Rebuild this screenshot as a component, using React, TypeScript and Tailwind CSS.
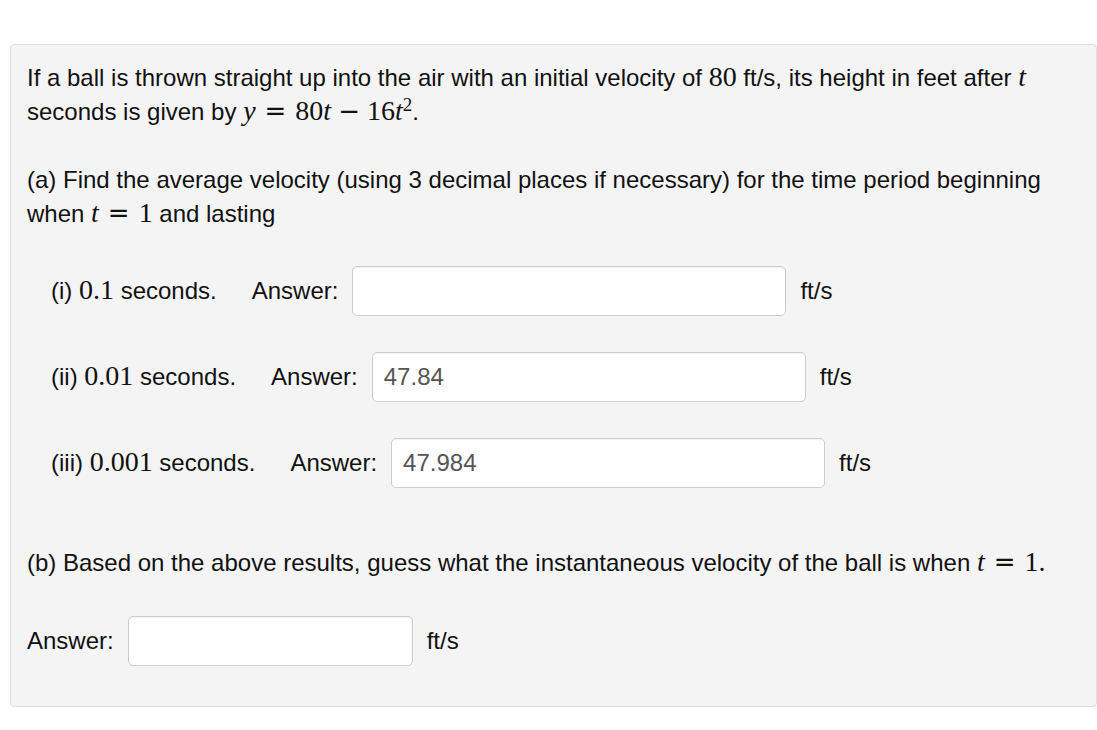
import React from "react";

const sans = { fontFamily: '"Liberation Sans", Arial, Helvetica, sans-serif' };

function M({ children }: { children: React.ReactNode }) {
  return (
    <span className="text-[28px] leading-none [font-family:'Liberation_Serif','Times_New_Roman',serif]">
      {children}
    </span>
  );
}

function V({ children }: { children: React.ReactNode }) {
  return <span className="italic">{children}</span>;
}

// relation / binary operator with KaTeX-like spacing
function Op({ children, rel }: { children: React.ReactNode; rel?: boolean }) {
  return (
    <span
      className={`text-[26px] [font-family:'DejaVu_Sans',sans-serif] ${rel ? "mx-[9px]" : "mx-[7px]"}`}
    >
      {children}
    </span>
  );
}

function AnswerRow({
  label,
  value,
  width,
  indent,
}: {
  label: React.ReactNode;
  value?: string;
  width: string;
  indent?: boolean;
}) {
  return (
    <div className={`flex items-center h-[50px] ${indent ? "ml-[24px]" : ""}`}>
      {label && <span className="mr-[35px] whitespace-nowrap">{label}</span>}
      <span className="mr-[14px]">Answer:</span>
      <input
        readOnly
        defaultValue={value}
        className={`${width} h-[50px] rounded-[5px] border border-[#cccccc] bg-white px-[11px] text-[24px] text-[#555555] outline-none shadow-[inset_0_1px_1px_rgba(0,0,0,0.05)]`}
        style={sans}
      />
      <span className="ml-[14px]">ft/s</span>
    </div>
  );
}

export default function App() {
  return (
    <div className="min-h-screen bg-white pt-[44px] pl-[10px] overflow-hidden" style={sans}>
      <div className="w-[1087px] rounded-[4px] border border-[#dedede] bg-[#f4f4f4] px-4 pt-4 pb-[40px] text-[24px] leading-[34px] text-[#111111]">
        <p>
          If a ball is thrown straight up into the air with an initial velocity of <M>80</M> ft/s, its height in feet after{" "}
          <M><V>t</V></M> seconds is given by{" "}
          <M>
            <V>y</V>
            <Op rel>=</Op>80<V>t</V>
            <Op>−</Op>16<V>t</V>
            <sup className="text-[19px] leading-none">2</sup>
          </M>
          .
        </p>

        <p className="mt-[34px]">
          (a) Find the average velocity (using 3 decimal places if necessary) for the time period beginning when{" "}
          <M>
            <V>t</V>
            <Op rel>=</Op>1
          </M>{" "}
          and lasting
        </p>

        <div className="mt-[35px] flex flex-col gap-[36px]">
          <AnswerRow
            indent
            label={
              <>
                (i) <M>0.1</M> seconds.
              </>
            }
            width="w-[434px]"
          />
          <AnswerRow
            indent
            label={
              <>
                (ii) <M>0.01</M> seconds.
              </>
            }
            value="47.84"
            width="w-[434px]"
          />
          <AnswerRow
            indent
            label={
              <>
                (iii) <M>0.001</M> seconds.
              </>
            }
            value="47.984"
            width="w-[434px]"
          />
        </div>

        <p className="mt-[58px]">
          (b) Based on the above results, guess what the instantaneous velocity of the ball is when{" "}
          <M>
            <V>t</V>
            <Op rel>=</Op>1.
          </M>
        </p>

        <div className="mt-[36px]">
          <AnswerRow label={null} width="w-[285px]" />
        </div>
      </div>
    </div>
  );
}
